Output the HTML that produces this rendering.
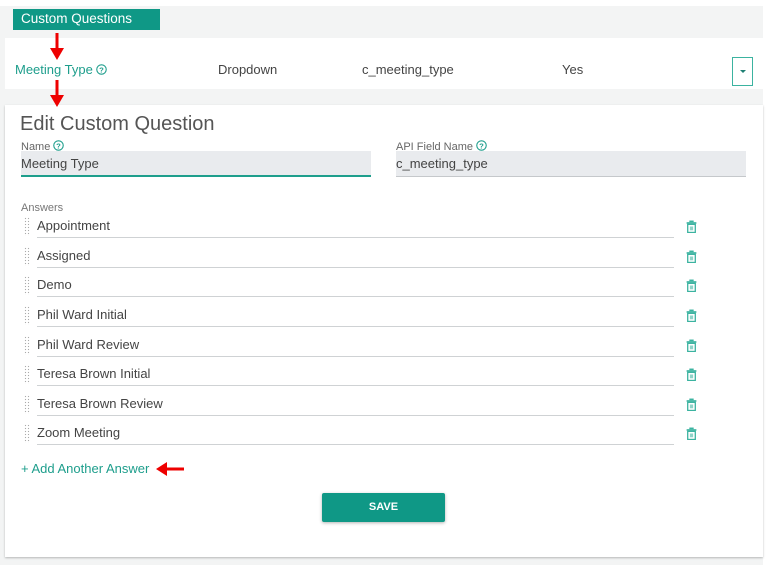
<!DOCTYPE html>
<html><head><meta charset="utf-8">
<style>
*{margin:0;padding:0;box-sizing:border-box}
body{width:768px;height:565px;background:#f3f4f4;font-family:"Liberation Sans",sans-serif;position:relative;overflow:hidden;color:#444}
.a{position:absolute}
.teal{color:#1e9e8c}
.help{display:inline-block;width:11px;height:11px;vertical-align:-1px}
.row{position:absolute;left:37px;width:637px;height:22px;border-bottom:1px solid #cfd2d4;font-size:13px;color:#444;line-height:20px}
.drag{position:absolute;left:-13px;top:1px;width:6px;height:19px;background-image:radial-gradient(circle,#aaa 0.7px,transparent 0.8px);background-size:3px 3px}
.trash{position:absolute;left:649px;top:4px}
</style></head><body>
<div class="a" style="left:0;top:0;width:768px;height:6px;background:#fff"></div>
<div class="a" style="left:763px;top:0;width:5px;height:565px;background:#fff"></div>
<div class="a" style="left:13px;top:9px;width:147px;height:21px;background:#0f9886;color:#fff;font-size:13.5px;line-height:20px;padding-left:8px">Custom Questions</div>
<div class="a" style="left:5px;top:38px;width:758px;height:51px;background:#fff"></div>
<div class="a teal" style="left:15px;top:62px;font-size:13px">Meeting Type <svg class="help" viewBox="0 0 10 10"><circle cx="5" cy="5" r="4.3" fill="none" stroke="#1e9e8c" stroke-width="1"/><text x="5" y="7.6" font-size="7" text-anchor="middle" fill="#1e9e8c" font-family="Liberation Sans" font-weight="bold">?</text></svg></div>
<div class="a" style="left:218px;top:62px;font-size:13px;color:#444">Dropdown</div>
<div class="a" style="left:362px;top:62px;font-size:13px;color:#444">c_meeting_type</div>
<div class="a" style="left:562px;top:62px;font-size:13px;color:#444">Yes</div>
<div class="a" style="left:732px;top:57px;width:21px;height:29px;border:1px solid #3bb3a0;background:#fff"><div class="a" style="left:7px;top:12px;border-left:3px solid transparent;border-right:3px solid transparent;border-top:3px solid #1e7f73"></div></div>
<div class="a" style="left:5px;top:105px;width:758px;height:452px;background:#fff;box-shadow:0 1px 2px rgba(0,0,0,.25)"></div>
<svg class="a" style="left:49px;top:33px" width="16" height="76" viewBox="0 0 16 76"><rect x="6.5" y="0" width="3" height="16" fill="#e00"/><polygon points="1,15 15,15 8,27" fill="#e00"/><rect x="6.5" y="47" width="3" height="16" fill="#e00"/><polygon points="1,62 15,62 8,74" fill="#e00"/></svg>
<div class="a" style="left:20px;top:113px;font-size:20px;color:#555">Edit Custom Question</div>
<div class="a" style="left:21px;top:140px;font-size:11px;color:#666">Name <svg class="help" viewBox="0 0 10 10"><circle cx="5" cy="5" r="4.3" fill="none" stroke="#1e9e8c"/><text x="5" y="7.6" font-size="7" text-anchor="middle" fill="#1e9e8c" font-weight="bold">?</text></svg></div>
<div class="a" style="left:21px;top:151px;width:350px;height:26px;background:#e9ebee;border-bottom:2px solid #1e9e8c;font-size:13px;color:#444;line-height:26px">Meeting Type</div>
<div class="a" style="left:396px;top:140px;font-size:11px;color:#666">API Field Name <svg class="help" viewBox="0 0 10 10"><circle cx="5" cy="5" r="4.3" fill="none" stroke="#1e9e8c"/><text x="5" y="7.6" font-size="7" text-anchor="middle" fill="#1e9e8c" font-weight="bold">?</text></svg></div>
<div class="a" style="left:396px;top:151px;width:350px;height:26px;background:#e9ebee;border-bottom:1px solid #c5c8cb;font-size:13px;color:#444;line-height:26px">c_meeting_type</div>
<div class="a" style="left:21px;top:202px;font-size:11px;color:#777">Answers</div>

<div class="row" style="top:216px">Appointment<div class="drag"></div><svg class="trash" width="11" height="13" viewBox="0 0 10 12"><rect x="3" y="0.5" width="4" height="1.5" fill="#3bb3a0"/><rect x="0.5" y="2" width="9" height="1.5" fill="#3bb3a0"/><rect x="1.5" y="4" width="7" height="7.5" fill="none" stroke="#3bb3a0" stroke-width="1.2"/><rect x="3.5" y="6" width="3" height="3.5" fill="#8fd3c8"/></svg></div>
<div class="row" style="top:246px">Assigned<div class="drag"></div><svg class="trash" width="11" height="13" viewBox="0 0 10 12"><rect x="3" y="0.5" width="4" height="1.5" fill="#3bb3a0"/><rect x="0.5" y="2" width="9" height="1.5" fill="#3bb3a0"/><rect x="1.5" y="4" width="7" height="7.5" fill="none" stroke="#3bb3a0" stroke-width="1.2"/><rect x="3.5" y="6" width="3" height="3.5" fill="#8fd3c8"/></svg></div>
<div class="row" style="top:275px">Demo<div class="drag"></div><svg class="trash" width="11" height="13" viewBox="0 0 10 12"><rect x="3" y="0.5" width="4" height="1.5" fill="#3bb3a0"/><rect x="0.5" y="2" width="9" height="1.5" fill="#3bb3a0"/><rect x="1.5" y="4" width="7" height="7.5" fill="none" stroke="#3bb3a0" stroke-width="1.2"/><rect x="3.5" y="6" width="3" height="3.5" fill="#8fd3c8"/></svg></div>
<div class="row" style="top:305px">Phil Ward Initial<div class="drag"></div><svg class="trash" width="11" height="13" viewBox="0 0 10 12"><rect x="3" y="0.5" width="4" height="1.5" fill="#3bb3a0"/><rect x="0.5" y="2" width="9" height="1.5" fill="#3bb3a0"/><rect x="1.5" y="4" width="7" height="7.5" fill="none" stroke="#3bb3a0" stroke-width="1.2"/><rect x="3.5" y="6" width="3" height="3.5" fill="#8fd3c8"/></svg></div>
<div class="row" style="top:335px">Phil Ward Review<div class="drag"></div><svg class="trash" width="11" height="13" viewBox="0 0 10 12"><rect x="3" y="0.5" width="4" height="1.5" fill="#3bb3a0"/><rect x="0.5" y="2" width="9" height="1.5" fill="#3bb3a0"/><rect x="1.5" y="4" width="7" height="7.5" fill="none" stroke="#3bb3a0" stroke-width="1.2"/><rect x="3.5" y="6" width="3" height="3.5" fill="#8fd3c8"/></svg></div>
<div class="row" style="top:364px">Teresa Brown Initial<div class="drag"></div><svg class="trash" width="11" height="13" viewBox="0 0 10 12"><rect x="3" y="0.5" width="4" height="1.5" fill="#3bb3a0"/><rect x="0.5" y="2" width="9" height="1.5" fill="#3bb3a0"/><rect x="1.5" y="4" width="7" height="7.5" fill="none" stroke="#3bb3a0" stroke-width="1.2"/><rect x="3.5" y="6" width="3" height="3.5" fill="#8fd3c8"/></svg></div>
<div class="row" style="top:394px">Teresa Brown Review<div class="drag"></div><svg class="trash" width="11" height="13" viewBox="0 0 10 12"><rect x="3" y="0.5" width="4" height="1.5" fill="#3bb3a0"/><rect x="0.5" y="2" width="9" height="1.5" fill="#3bb3a0"/><rect x="1.5" y="4" width="7" height="7.5" fill="none" stroke="#3bb3a0" stroke-width="1.2"/><rect x="3.5" y="6" width="3" height="3.5" fill="#8fd3c8"/></svg></div>
<div class="row" style="top:423px">Zoom Meeting<div class="drag"></div><svg class="trash" width="11" height="13" viewBox="0 0 10 12"><rect x="3" y="0.5" width="4" height="1.5" fill="#3bb3a0"/><rect x="0.5" y="2" width="9" height="1.5" fill="#3bb3a0"/><rect x="1.5" y="4" width="7" height="7.5" fill="none" stroke="#3bb3a0" stroke-width="1.2"/><rect x="3.5" y="6" width="3" height="3.5" fill="#8fd3c8"/></svg></div>

<div class="a teal" style="left:21px;top:461px;font-size:13px">+ Add Another Answer</div>
<svg class="a" style="left:156px;top:461px" width="29" height="16" viewBox="0 0 29 16"><polygon points="0,8 11,1 11,15" fill="#e00"/><rect x="10" y="6.5" width="18" height="3" fill="#e00"/></svg>
<div class="a" style="left:322px;top:493px;width:123px;height:29px;background:#0f9886;color:#fff;font-size:11px;font-weight:bold;text-align:center;line-height:29px;border-radius:2px;box-shadow:0 1px 3px rgba(0,0,0,.3)">SAVE</div>
</body></html>
